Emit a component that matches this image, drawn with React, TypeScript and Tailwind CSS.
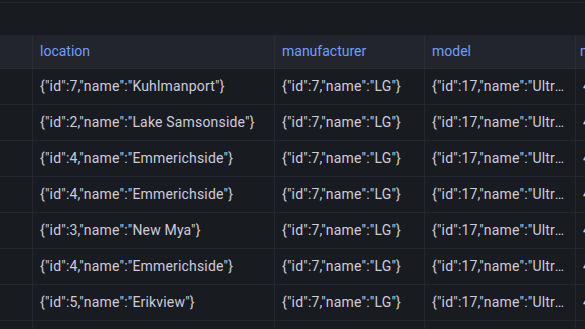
import React from 'react'

const rows = [
  { location: '{"id":7,"name":"Kuhlmanport"}' },
  { location: '{"id":2,"name":"Lake Samsonside"}' },
  { location: '{"id":4,"name":"Emmerichside"}' },
  { location: '{"id":4,"name":"Emmerichside"}' },
  { location: '{"id":3,"name":"New Mya"}' },
  { location: '{"id":4,"name":"Emmerichside"}' },
  { location: '{"id":5,"name":"Erikview"}' },
  { location: '{"id":6,"name":"Port Ceasar"}' },
]

export default function App() {
  return (
    <div
      className="w-[585px] h-[329px] overflow-hidden bg-[#181b1f] text-[14px] text-[#ccccdc]"
      style={{ fontFamily: 'Roboto, "Liberation Sans", sans-serif' }}
    >
      {/* top strip */}
      <div className="h-[3px] border-b border-[#24272d]" />
      <div className="h-[32px]" />

      {/* header */}
      <div className="flex h-[34px] bg-[#22252b] border-b border-[#2a2d33] text-[#6e9fff]">
        <div className="w-[33px] shrink-0 border-r border-[#2a2d33]" />
        <div className="w-[242px] shrink-0 border-r border-[#2a2d33] px-[7px] flex items-center">location</div>
        <div className="w-[150px] shrink-0 border-r border-[#2a2d33] px-[7px] flex items-center">manufacturer</div>
        <div className="w-[151px] shrink-0 border-r border-[#2a2d33] px-[7px] flex items-center">model</div>
        <div className="w-[9px] shrink-0 pl-[4px] flex items-center overflow-hidden whitespace-nowrap">m</div>
      </div>

      {rows.map((row, i) => (
        <div key={i} className="flex h-[36px] border-b border-[#24272d] tracking-[0.18px]">
          <div className="w-[33px] shrink-0 border-r border-[#24272d]" />
          <div className="w-[242px] shrink-0 border-r border-[#24272d] px-[7px] flex items-center whitespace-nowrap">
            {row.location}
          </div>
          <div className="w-[150px] shrink-0 border-r border-[#24272d] px-[7px] flex items-center whitespace-nowrap">
            {'{"id":7,"name":"LG"}'}
          </div>
          <div className="w-[151px] shrink-0 border-r border-[#24272d] pl-[7px] pr-[8px] flex items-center min-w-0">
            <span className="truncate">{'{"id":17,"name":"Ultra"}'}</span>
          </div>
          <div className="w-[9px] shrink-0 pl-[7px] flex items-center overflow-hidden whitespace-nowrap">4</div>
        </div>
      ))}
    </div>
  )
}
